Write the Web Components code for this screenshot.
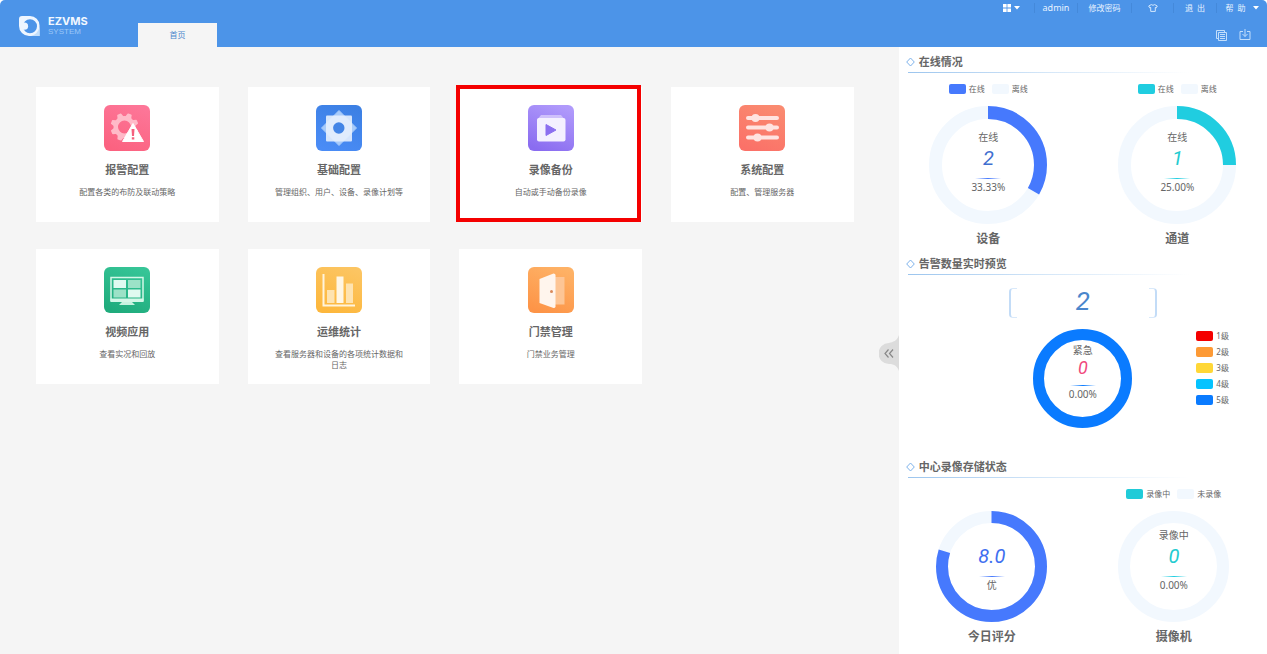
<!DOCTYPE html>
<html lang="zh-CN">
<head>
<meta charset="utf-8">
<meta name="viewport" content="width=device-width, initial-scale=1">
<title>EZVMS SYSTEM</title>
<style>
  html, body { height: 100%; margin: 0; }
  body { background: #fff; color: #666; font: 8px/12px "Noto Sans", "Noto Sans CJK SC", sans-serif; }
</style>
</head>
<body>
<vms-app>
  <vms-header slot="header"></vms-header>

  <vms-card slot="cards" icon="alarm">报警配置<span slot="desc">配置各类的布防及联动策略</span></vms-card>
  <vms-card slot="cards" icon="basic">基础配置<span slot="desc">管理组织、用户、设备、录像计划等</span></vms-card>
  <vms-card slot="cards" icon="backup" marked>录像备份<span slot="desc">自动或手动备份录像</span></vms-card>
  <vms-card slot="cards" icon="system">系统配置<span slot="desc">配置、管理服务器</span></vms-card>
  <vms-card slot="cards" icon="video">视频应用<span slot="desc">查看实况和回放</span></vms-card>
  <vms-card slot="cards" icon="stats">运维统计<span slot="desc">查看服务器和设备的各项统计数据和日志</span></vms-card>
  <vms-card slot="cards" icon="door">门禁管理<span slot="desc">门禁业务管理</span></vms-card>

  <vms-panel slot="side">
    <span slot="title">在线情况</span>
    <vms-gauge size="118" thick="13" value="33.33" color="#4679fd" ink="#3f6fd0" caption="设备">
      <vms-key slot="legend" color="#4679fd">在线</vms-key><vms-key slot="legend" color="#f2f8fe">离线</vms-key>
      <span slot="label">在线</span><span slot="number">2</span><span slot="note">33.33%</span>
    </vms-gauge>
    <vms-gauge size="118" thick="13" value="25" color="#20cde0" ink="#23cbd0" caption="通道">
      <vms-key slot="legend" color="#20cde0">在线</vms-key><vms-key slot="legend" color="#f2f8fe">离线</vms-key>
      <span slot="label">在线</span><span slot="number">1</span><span slot="note">25.00%</span>
    </vms-gauge>
  </vms-panel>

  <vms-alarm-panel slot="side"></vms-alarm-panel>

  <vms-panel slot="side">
    <span slot="title">中心录像存储状态</span>
    <vms-gauge size="111" thick="12" value="80" color="#4679fd" ink="#3f6ff0" caption="今日评分">
      <span slot="number">8.0</span><span slot="note">优</span>
    </vms-gauge>
    <vms-gauge size="111" thick="12" value="0" color="#20cde0" ink="#23cbd0" caption="摄像机">
      <vms-key slot="legend" color="#20cbd8">录像中</vms-key><vms-key slot="legend" color="#f2f8fe">未录像</vms-key>
      <span slot="label">录像中</span><span slot="number">0</span><span slot="note">0.00%</span>
    </vms-gauge>
  </vms-panel>
</vms-app>

<script>
const define = (name, render) => customElements.define(name, class extends HTMLElement {
  constructor() {
    super();
    this.attachShadow({ mode: 'open' });
  }
  connectedCallback() {
    this.shadowRoot.innerHTML = render(this);
  }
});

/* Application shell: header, card area with the fold handle, side column */
define('vms-app', () => `
<style>
  :host { display: flex; flex-direction: column; min-height: 100vh; }
  .body { flex: 1; display: grid; grid-template-columns: 244fr 100fr; }
  main { position: relative; background: #f5f5f5; padding: 40px 45px 40px 36px; }
  .cards { display: grid; grid-template-columns: repeat(4, 1fr); grid-auto-rows: minmax(135px, auto); gap: 27px 29px; }
  aside { background: #fff; display: grid; grid-template-rows: repeat(3, 1fr); }
  .fold { position: absolute; right: 0; top: 50%; margin-top: -18px; width: 20px; height: 40px; padding: 0; border: 0; background: none; cursor: pointer; }
  .fold svg { display: block; }
</style>
<slot name="header"></slot>
<div class="body">
  <main>
    <div class="cards"><slot name="cards"></slot></div>
    <button class="fold" aria-label="收起">
      <svg width="20" height="40" viewBox="0 0 20 40"><path d="M20 2C18 8 14 9 10 10A10.500 10.500 0 0 0 10 31C14 31 18 32 20 38Z" fill="#dcdcdc"/><path d="M9.500 16.500L6 20.500L9.500 24.500M14 16.500L10.500 20.500L14 24.500" fill="none" stroke="#888" stroke-width="1.200"/></svg>
    </button>
  </main>
  <aside><slot name="side"></slot></aside>
</div>`);

define('vms-header', () => `
<style>
  :host { display: flex; justify-content: space-between; height: 47px; background: #4c94e8; color: #e8f3ff; border-radius: 5px 5px 0 0; }
  a { color: inherit; text-decoration: none; }
  .left { display: flex; }
  .brand { display: flex; gap: 8px; width: 120px; padding: 15px 0 0 18px; box-sizing: border-box; margin-right: 18px; white-space: nowrap; }
  .brand svg { flex: none; }
  .name { font: bold 11px/12px Inter, sans-serif; color: #f2f8ff; }
  .sub { font: 8px/10px "Liberation Sans", sans-serif; color: #9cc7f7; }
  .tab { align-self: flex-end; width: 79px; height: 24px; line-height: 24px; text-align: center; background: #f5f5f5; color: #4a86cc; }
  .right { display: flex; flex-direction: column; align-items: flex-end; justify-content: space-between; }
  nav { display: flex; height: 16px; align-items: center; }
  nav > * { display: flex; align-items: center; justify-content: center; height: 10px; width: 42px; color: inherit; font: inherit; line-height: 10px; padding: 0; border: 0; border-left: 1px solid #4489da; background: none; white-space: nowrap; cursor: pointer; }
  nav .grid { border-left: 0; gap: 3px; width: 46px; }
  nav .user { font-size: 9px; }
  nav .pass { width: 53px; }
  nav .help { width: 51px; gap: 7px; }
  .tools { display: flex; gap: 12px; padding: 0 16px 6px 0; }
  .tools button { padding: 0; border: 0; background: none; height: 12px; cursor: pointer; }
  svg { display: block; }
</style>
<div class="left">
  <div class="brand">
    <svg width="22" height="22" viewBox="0 0 22 22"><path fill="#eef6ff" fill-rule="evenodd" d="M4 1H12A9.500 9.500 0 0 1 21.500 10.500V21H11A10 10 0 0 1 1 11V4A3 3 0 0 1 4 1ZM12 4.200a7 7 0 1 0 0 14a7 7 0 1 0 0-14z"/><circle cx="6.500" cy="11.200" r="3.600" fill="#eef6ff"/><path d="M13 21Q20 19 21.500 12V21Z" fill="#c2dffc"/></svg>
    <div><div class="name">EZVMS</div><div class="sub">SYSTEM</div></div>
  </div>
  <a class="tab" href="#home">首页</a>
</div>
<div class="right">
  <nav>
    <button class="grid" aria-label="应用">
      <svg width="8" height="8" viewBox="0 0 8 8" fill="#fff"><path d="M0 0h3.600v3.600H0zM4.400 0H8v3.600H4.400zM0 4.400h3.600V8H0zM4.400 4.400H8V8H4.400z"/></svg>
      <svg width="6" height="4" viewBox="0 0 6 4"><path d="M0 0H6L3 3.500Z" fill="#fff"/></svg>
    </button>
    <a class="user" href="#admin">admin</a>
    <a class="pass" href="#password">修改密码</a>
    <button aria-label="皮肤"><svg width="10" height="8" viewBox="0 0 10 8"><path d="M3.300.600L.700 2L1.700 3.800L2.700 3.400V7.400H7.300V3.400L8.300 3.800L9.300 2L6.700.600Q5 2 3.300.600Z" fill="none" stroke="#e2f0ff" stroke-width=".9"/></svg></button>
    <a href="#exit">退&nbsp;&nbsp;出</a>
    <button class="help">帮&nbsp;&nbsp;助<svg width="6" height="4" viewBox="0 0 6 4"><path d="M0 0H6L3 3.500Z" fill="#fff"/></svg></button>
  </nav>
  <div class="tools">
    <button aria-label="列表"><svg width="12" height="12" viewBox="0 0 12 12" fill="none" stroke="#c2defb"><path d="M3 9.500H1.500V1.500H9.500V3M3.500 3.500H11.500V11.500H3.500ZM5 5.500H10M5 7.500H10M5 9.500H10"/></svg></button>
    <button aria-label="下载"><svg width="12" height="12" viewBox="0 0 12 12" fill="none" stroke="#c2defb"><path d="M4 2.500H1V10.500H11V2.500H8M6 0V7.500M3.500 5L6 7.500L8.500 5"/></svg></button>
  </div>
</div>`);

const teeth = Array.from({ length: 8 }, (_, i) =>
  `<path d="M18.300 8.500Q18.500 8 19 8H22Q22.500 8 22.700 8.500L24 13H17Z" transform="rotate(${i * 45 + 22} 20.500 22)"/>`).join('');

const ICONS = {
  alarm: ['#fd7698', '#fb6280', `
    <g fill="#ffbac8"><path fill-rule="evenodd" d="M20.500 11a11 11 0 1 0 0 22a11 11 0 1 0 0-22zm0 4.500a6.500 6.500 0 1 1 0 13a6.500 6.500 0 1 1 0-13z"/>${teeth}</g>
    <path d="M29 18.500L39.500 36.500H18.500Z" fill="#fff" stroke="#fff" stroke-linejoin="round"/><path d="M27.500 24h3l-.5 7h-2zM27.800 32.300h2.500v2.300h-2.500z" fill="#f5607e"/>`],
  basic: ['#3c80e4', '#4a8cf6', `
    <path d="M23 5.500L40.500 23L23 40.500L5.500 23Z" fill="#a8cbfa" stroke="#a8cbfa" stroke-linejoin="round"/>
    <rect x="10" y="10.500" width="26" height="26" rx="1" fill="#e6f0fd" opacity=".9"/><circle cx="22.800" cy="23" r="5.700" fill="#4385e6"/>`],
  backup: ['#b09afb', '#8a6cf0', `
    <path d="M13 10H33L37 15V34H9V15Z" fill="#cfc0fb"/><rect x="9" y="13" width="28.500" height="23.500" rx="2" fill="#f4f0ff"/>
    <path d="M18 19.500L28 25L18 30.500Z" fill="#8c6ff0" stroke="#8c6ff0" stroke-linejoin="round"/>`],
  system: ['#fa8a70', '#fb7168', `
    <g stroke="#ffe3e0" stroke-width="4" stroke-linecap="round"><path d="M9 13H38M9 22.500H38M9 32.500H38"/></g>
    <g fill="#ffe3e0"><circle cx="16.500" cy="13" r="4"/><circle cx="30.500" cy="22.500" r="4"/><circle cx="18.500" cy="32.500" r="4"/></g>`],
  video: ['#36c597', '#1fab7c', `
    <rect x="7" y="10.500" width="32" height="23" fill="none" stroke="#d4f7e8" stroke-width="1.500"/><path d="M6.500 31.500H39.500V35H6.500Z" fill="#d4f7e8"/>
    <path d="M18 35H28L31 38H15Z" fill="#c7f2e0"/>
    <path d="M9.500 13H22V21H9.500ZM24 22.500H36.500V30.500H24Z" fill="#e0faf0"/><path d="M24 13H36.500V21H24ZM9.500 22.500H22V30.500H9.500Z" fill="#9ce2c7"/>`],
  stats: ['#fcc562', '#fdb73c', `
    <path d="M7.500 7V38.500H39" fill="none" stroke="#fff4dc" stroke-width="2"/>
    <path d="M11 23H18.500V36H11ZM30 16.500H37V36H30Z" fill="#fee3b0"/><path d="M20.500 9.500H27.500V36H20.500Z" fill="#fff6e4"/>`],
  door: ['#feb266', '#fd9447', `
    <path d="M27 10H36.500V37.500H27Z" fill="#fdc595"/><path d="M11.500 12L25.500 6.500Q27.500 6.500 27.500 8V39.500Q27.500 41 25.500 41L11.500 36Z" fill="#fff5ed"/>
    <circle cx="23.500" cy="24.500" r="1.500" fill="#d98a5c"/>`],
};

define('vms-card', (el) => {
  const id = el.getAttribute('icon');
  const [from, to, art] = ICONS[id];
  return `
<style>
  :host { display: block; position: relative; background: #fff; }
  :host([marked])::after { content: ""; position: absolute; inset: -2px 1px 0 -3px; border: 4px solid #f40000; pointer-events: none; }
  a { display: flex; flex-direction: column; align-items: center; padding: 18px 24px 12px; color: inherit; text-decoration: none; text-align: center; }
  svg { display: block; }
  .title { margin-top: 11px; font-size: 11px; line-height: 16px; font-weight: 600; color: #666; }
  .desc { margin-top: 8px; font-size: 8px; line-height: 11px; }
</style>
<a href="#${id}">
  <svg width="46" height="46" viewBox="0 0 46 46" aria-hidden="true">
    <defs><linearGradient id="g" x1=".7" y1="0" x2=".3" y2="1"><stop stop-color="${from}"/><stop offset="1" stop-color="${to}"/></linearGradient></defs>
    <rect width="46" height="46" rx="6" fill="url(#g)"/>${art}
  </svg>
  <span class="title"><slot></slot></span>
  <span class="desc"><slot name="desc"></slot></span>
</a>`;
});

/* Section heading with a fading rule below it */
define('vms-heading', () => `
<style>
  :host { display: block; padding: 5px 8px 0 7px; }
  h2 { display: flex; align-items: center; gap: 4px; margin: 0; font-size: 11px; line-height: 20px; font-weight: 600; color: #666; }
  .rule { height: 1px; margin: 0 70px 0 2px; background: linear-gradient(90deg, #9cc5ee, #d5e7f8 50%, #fff); }
</style>
<h2><svg width="9" height="10" viewBox="0 0 9 10"><path d="M4.500 1L8.300 5L4.500 9L.700 5Z" fill="none" stroke="#7db1ea"/></svg><slot></slot></h2>
<div class="rule"></div>`);

define('vms-key', (el) => `
<style>
  :host { display: flex; align-items: center; gap: 3px; line-height: 12px; white-space: nowrap; }
  i { width: 17px; height: 10px; border-radius: 2px; background: ${el.getAttribute('color')}; }
</style>
<i></i><span><slot></slot></span>`);

define('vms-panel', () => `
<style>
  :host { display: block; }
  .row { display: flex; justify-content: center; align-items: flex-end; gap: 71px; padding-top: 10px; }
</style>
<vms-heading><slot name="title"></slot></vms-heading>
<div class="row"><slot></slot></div>`);

/* Ring gauge: legend above, value inside, caption below */
define('vms-gauge', (el) => {
  const size = +el.getAttribute('size');
  const thick = +el.getAttribute('thick');
  const value = +el.getAttribute('value');
  const color = el.getAttribute('color');
  const caption = el.getAttribute('caption');
  const small = size < 110;
  const arc = value ? `<circle cx="${size / 2}" cy="${size / 2}" r="${(size - thick) / 2}" stroke="${color}" pathLength="100" stroke-dasharray="${value} ${100 - value}" transform="rotate(-90 ${size / 2} ${size / 2})"/>` : '';
  return `
<style>
  :host { display: flex; flex-direction: column; align-items: center; width: ${size}px; }
  .legend { display: flex; gap: 7px; margin-bottom: 11px; }
  .ring { display: grid; width: ${size}px; height: ${size}px; }
  .ring > * { grid-area: 1 / 1; }
  svg { display: block; }
  .text { display: flex; flex-direction: column; align-items: center; justify-content: flex-end; padding-bottom: ${small ? 27 : 30}px; }
  .label { font-size: 10px; line-height: 14px; }
  .number { font: italic 400 ${small ? 18 : 20}px/${small ? 22 : 28}px Roboto, sans-serif; color: ${el.getAttribute('ink')}; }
  .line { width: 26px; height: 1px; margin-top: 6px; background: linear-gradient(90deg, #fff, ${color}, #fff); }
  .note { margin-top: 1px; font-size: 10px; line-height: 14px; }
  .caption { margin-top: 7px; font-size: 12px; line-height: 16px; font-weight: bold; color: #666; white-space: nowrap; }
</style>
<div class="legend"><slot name="legend"></slot></div>
<div class="ring">
  <svg width="${size}" height="${size}" fill="none" stroke-width="${thick}"><circle cx="${size / 2}" cy="${size / 2}" r="${(size - thick) / 2}" stroke="#f2f8fe"/>${arc}</svg>
  <div class="text">
    <div class="label"><slot name="label"></slot></div>
    <div class="number"><slot name="number"></slot></div>
    <div class="line"></div>
    <div class="note"><slot name="note"></slot></div>
  </div>
</div>
${caption ? `<div class="caption">${caption}</div>` : ''}`;
});

define('vms-alarm-panel', () => `
<style>
  :host { display: block; }
  .total { position: relative; width: 148px; height: 30px; margin: 13px auto 0; text-align: center; font: italic 400 26px/26px Roboto, sans-serif; color: #4a86cc; }
  .total::before, .total::after { content: ""; position: absolute; top: 0; bottom: 0; width: 8px; border: 1px solid #d9e9fa; box-sizing: border-box; }
  .total::before { left: 0; border-left: 2px solid #c3dcf7; border-right: 0; border-radius: 4px 0 0 4px; }
  .total::after { right: 0; border-right: 2px solid #c3dcf7; border-left: 0; border-radius: 0 4px 4px 0; }
  .row { display: grid; grid-template-columns: 1fr auto 1fr; }
  .row vms-gauge { grid-column: 2; }
  .keys { display: flex; flex-direction: column; gap: 4px; padding: 12px 0 0 64px; }
</style>
<vms-heading>告警数量实时预览</vms-heading>
<div class="total">2</div>
<div class="row">
  <vms-gauge size="99" thick="11" value="100" color="#0a7bff" ink="#f0487c">
    <span slot="label">紧急</span><span slot="number">0</span><span slot="note">0.00%</span>
  </vms-gauge>
  <div class="keys">
    <vms-key color="#f40000">1级</vms-key>
    <vms-key color="#fd9a35">2级</vms-key>
    <vms-key color="#ffd737">3级</vms-key>
    <vms-key color="#05c3ff">4级</vms-key>
    <vms-key color="#0a7bff">5级</vms-key>
  </div>
</div>`);
</script>
</body>
</html>
